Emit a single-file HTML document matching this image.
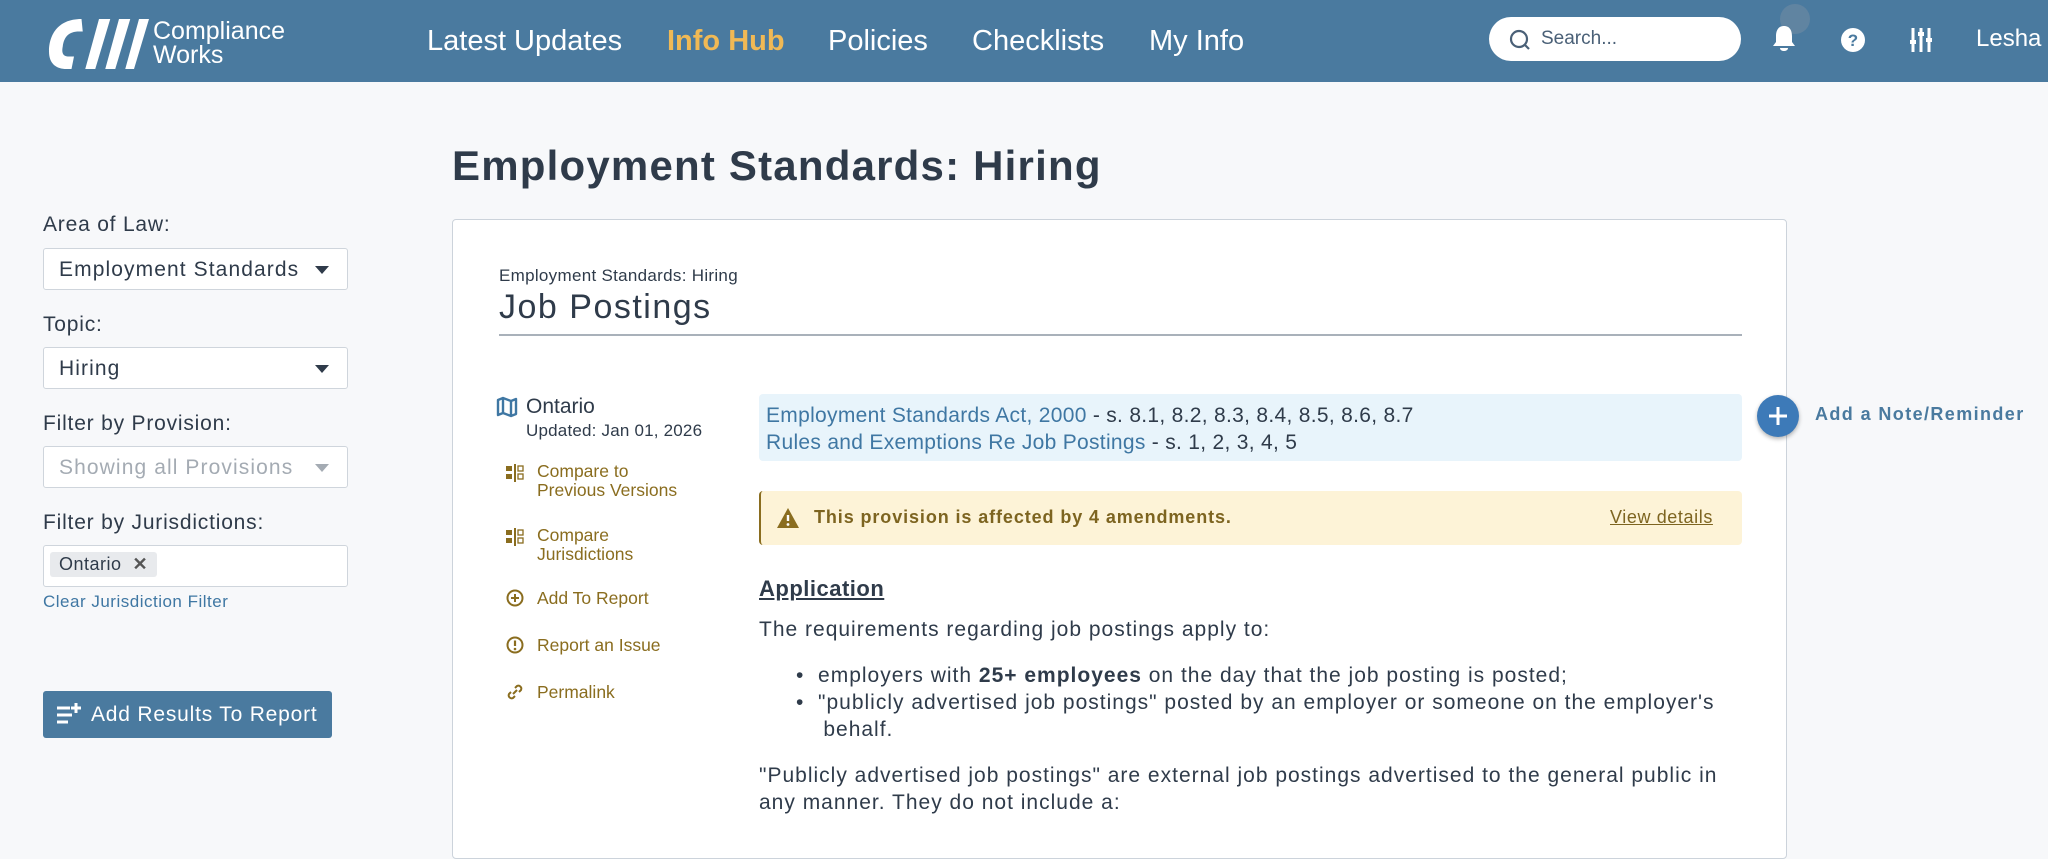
<!DOCTYPE html>
<html><head><meta charset="utf-8"><style>
*{box-sizing:border-box;margin:0;padding:0}
body{width:2048px;height:836px;overflow:hidden;background:#f7f8fa;font-family:"Liberation Sans",sans-serif;color:#2f3b4a;position:relative}
.a{position:absolute;white-space:nowrap}
header{position:absolute;left:0;top:0;width:2048px;height:82px;background:#4a7a9f}
.nav{font-size:29px;color:#fff;top:25px}
.lbl{font-size:21px;color:#2f3b4a;left:43px;letter-spacing:0.8px}
.sel{position:absolute;left:43px;width:305px;height:42px;background:#fff;border:1.5px solid #cfd5dc;border-radius:3px;font-size:21px;padding:9px 15px;letter-spacing:1.1px}
.sel .car{position:absolute;right:18px;top:17px;width:0;height:0;border-left:7px solid transparent;border-right:7px solid transparent;border-top:8px solid #2f3b4a}
.gold{color:#8a6d1f;font-size:17.5px;line-height:19px}
.ic{position:absolute;left:506px}
.body{font-size:21px;color:#2f3b4a;letter-spacing:1px}
</style></head><body>
<header>
<svg class="a" style="left:44px;top:14px" width="260" height="56" viewBox="0 0 260 56">
<g transform="scale(1.25)">
<path d="M30 4 C10 4 4 18 4 30 C4 40 10 44 18 44 L22 44 L24 34 L20 34 C15 34 14 31 15 26 C16 18 20 14 28 14 L31 14 Z" fill="#fff"/>
<path d="M44 4 L53 4 L41 44 L33 44 Z" fill="#fff"/>
<path d="M60 4 L69 4 L57 44 L49 44 Z" fill="#fff"/>
<path d="M76 4 L84 4 L72 44 L65 44 Z" fill="#fff"/>
</g>
<text x="109" y="25" font-family="Liberation Sans" font-size="25" fill="#fff">Compliance</text>
<text x="109" y="49" font-family="Liberation Sans" font-size="25" fill="#fff">Works</text>
</svg>
<div class="a nav" style="left:427px">Latest Updates</div>
<div class="a nav" style="left:667px;color:#f0b955;font-weight:bold">Info Hub</div>
<div class="a nav" style="left:828px">Policies</div>
<div class="a nav" style="left:972px">Checklists</div>
<div class="a nav" style="left:1149px">My Info</div>
<div class="a" style="left:1489px;top:17px;width:252px;height:44px;background:#fff;border-radius:22px"></div>
<svg class="a" style="left:1508px;top:28px" width="24" height="24" viewBox="0 0 24 24"><circle cx="11" cy="11" r="8" fill="none" stroke="#4a6077" stroke-width="2.2"/><path d="M17 17 L21 21" stroke="#4a6077" stroke-width="2.2"/></svg>
<div class="a" style="left:1541px;top:28px;font-size:19px;color:#4a6077">Search...</div>
<div class="a" style="left:1780px;top:4px;width:30px;height:30px;border-radius:50%;background:#6f8aa3;opacity:.6"></div>
<svg class="a" style="left:1770px;top:24px" width="28" height="30" viewBox="0 0 28 30"><path d="M14 2 C8 2 6 7 6 12 L6 18 L3 22 L25 22 L22 18 L22 12 C22 7 20 2 14 2Z M10 24 L18 24 C18 28 10 28 10 24Z" fill="#fff"/></svg>
<svg class="a" style="left:1840px;top:27px" width="26" height="26" viewBox="0 0 26 26"><circle cx="13" cy="13" r="12" fill="#fff"/><text x="13" y="19" text-anchor="middle" font-family="Liberation Sans" font-weight="bold" font-size="17" fill="#4a7a9f">?</text></svg>
<svg class="a" style="left:1910px;top:26px" width="22" height="28" viewBox="0 0 22 28"><g stroke="#fff" stroke-width="3"><path d="M3 2V26M11 2V26M19 2V26"/></g><g fill="#fff"><rect x="0" y="14" width="6" height="4"/><rect x="8" y="6" width="6" height="4"/><rect x="16" y="12" width="6" height="4"/></g></svg>
<div class="a" style="left:1976px;top:25px;font-size:24px;color:#fff">Lesha</div>
</header>

<div class="a lbl" style="top:213px">Area of Law:</div>
<div class="sel" style="top:248px">Employment Standards<span class="car"></span></div>
<div class="a lbl" style="top:313px">Topic:</div>
<div class="sel" style="top:347px">Hiring<span class="car"></span></div>
<div class="a lbl" style="top:412px">Filter by Provision:</div>
<div class="sel" style="top:446px;color:#a4abb3">Showing all Provisions<span class="car" style="border-top-color:#a4abb3"></span></div>
<div class="a lbl" style="top:511px">Filter by Jurisdictions:</div>
<div class="sel" style="top:545px;padding:6px 6px;letter-spacing:0.5px"><span style="display:inline-block;background:#e8eaed;border-radius:3px;padding:2px 9px;font-size:18px">Ontario &nbsp;<b style="color:#555">✕</b></span></div>
<div class="a" style="left:43px;top:592px;font-size:17px;color:#3f77a3;letter-spacing:0.5px">Clear Jurisdiction Filter</div>
<div class="a" style="left:43px;top:691px;width:289px;height:47px;background:#4a7a9f;border-radius:3px;color:#fff;font-size:21px;padding:12px 0 0 48px;letter-spacing:0.8px">Add Results To Report</div>
<svg class="a" style="left:56px;top:702px" width="26" height="24" viewBox="0 0 26 24"><g stroke="#fff" stroke-width="3"><path d="M1 6H14M1 13H16M1 20H12M20 1V11M15 6H25"/></g></svg>

<div class="a" style="left:452px;top:142px;font-size:42px;font-weight:bold;color:#2f3b4a;letter-spacing:1.2px">Employment Standards: Hiring</div>
<div class="a" style="left:452px;top:219px;width:1335px;height:640px;background:#fff;border:1.5px solid #ccd3db;border-radius:4px"></div>
<div class="a" style="left:499px;top:266px;font-size:17px;letter-spacing:0.3px">Employment Standards: Hiring</div>
<div class="a" style="left:499px;top:288px;font-size:34px;letter-spacing:1.5px">Job Postings</div>
<div class="a" style="left:499px;top:334px;width:1243px;height:1.5px;background:#a9b1ba"></div>

<svg class="a" style="left:496px;top:396px" width="22" height="22" viewBox="0 0 22 22"><path d="M2 4 L7 2 L15 5 L20 3 L20 18 L15 20 L7 17 L2 19Z M7 2V17 M15 5V20" fill="none" stroke="#3f77a3" stroke-width="2.4" stroke-linejoin="round"/></svg>
<div class="a" style="left:526px;top:395px;font-size:21px">Ontario</div>
<div class="a" style="left:526px;top:421px;font-size:17px;letter-spacing:0.2px">Updated: Jan 01, 2026</div>
<svg class="ic" style="top:464px" width="18" height="18" viewBox="0 0 18 18" fill="#8a6d1f"><rect x="0" y="2" width="6" height="5"/><rect x="0" y="10" width="6" height="5"/><rect x="8" y="0" width="2" height="18"/><rect x="12" y="2" width="5" height="5" fill="none" stroke="#8a6d1f" stroke-width="1.3"/><rect x="12" y="10" width="5" height="5" fill="none" stroke="#8a6d1f" stroke-width="1.3"/></svg>
<div class="a gold" style="left:537px;top:462px">Compare to<br>Previous Versions</div>
<svg class="ic" style="top:528px" width="18" height="18" viewBox="0 0 18 18" fill="#8a6d1f"><rect x="0" y="2" width="6" height="5"/><rect x="0" y="10" width="6" height="5"/><rect x="8" y="0" width="2" height="18"/><rect x="12" y="2" width="5" height="5" fill="none" stroke="#8a6d1f" stroke-width="1.3"/><rect x="12" y="10" width="5" height="5" fill="none" stroke="#8a6d1f" stroke-width="1.3"/></svg>
<div class="a gold" style="left:537px;top:526px">Compare<br>Jurisdictions</div>
<svg class="ic" style="top:589px" width="18" height="18" viewBox="0 0 18 18"><circle cx="9" cy="9" r="7.5" fill="none" stroke="#8a6d1f" stroke-width="2"/><path d="M9 5V13M5 9H13" stroke="#8a6d1f" stroke-width="2"/></svg>
<div class="a gold" style="left:537px;top:589px">Add To Report</div>
<svg class="ic" style="top:636px" width="18" height="18" viewBox="0 0 18 18"><circle cx="9" cy="9" r="7.5" fill="none" stroke="#8a6d1f" stroke-width="2"/><path d="M9 4.5V10" stroke="#8a6d1f" stroke-width="2.2"/><circle cx="9" cy="13" r="1.3" fill="#8a6d1f"/></svg>
<div class="a gold" style="left:537px;top:636px">Report an Issue</div>
<svg class="ic" style="top:683px" width="18" height="18" viewBox="0 0 18 18"><g fill="none" stroke="#8a6d1f" stroke-width="2"><path d="M7 11 L11 7"/><path d="M9 5 L11 3 A3 3 0 0 1 15 7 L13 9"/><path d="M5 9 L3 11 A3 3 0 0 0 7 15 L9 13"/></g></svg>
<div class="a gold" style="left:537px;top:683px">Permalink</div>

<div class="a" style="left:759px;top:394px;width:983px;height:67px;background:#e8f4fb;border-radius:4px"></div>
<div class="a body" style="left:766px;top:402px;line-height:27px;letter-spacing:0.3px"><span style="color:#3f77a3">Employment Standards Act, 2000</span> - s. 8.1, 8.2, 8.3, 8.4, 8.5, 8.6, 8.7<br><span style="color:#3f77a3">Rules and Exemptions Re Job Postings</span> - s. 1, 2, 3, 4, 5</div>
<div class="a" style="left:1757px;top:395px;width:42px;height:42px;border-radius:50%;background:#3d7ab8;box-shadow:0 2px 4px rgba(0,0,0,.3)"></div>
<svg class="a" style="left:1768px;top:406px" width="20" height="20"><path d="M10 1V19M1 10H19" stroke="#fff" stroke-width="3"/></svg>
<div class="a" style="left:1815px;top:404px;font-size:18px;font-weight:bold;color:#4a7a9f;letter-spacing:1.4px">Add a Note/Reminder</div>

<div class="a" style="left:759px;top:491px;width:983px;height:54px;background:#fdf3d7;border-left:2.5px solid #8a6d1f;border-radius:4px"></div>
<svg class="a" style="left:776px;top:507px" width="24" height="22" viewBox="0 0 24 22"><path d="M12 1 L23 21 L1 21Z" fill="#8a6d1f"/><path d="M12 8V14" stroke="#fff" stroke-width="2.4"/><circle cx="12" cy="17.5" r="1.4" fill="#fff"/></svg>
<div class="a" style="left:814px;top:507px;font-size:18px;font-weight:bold;color:#7d6420;letter-spacing:0.9px">This provision is affected by 4 amendments.</div>
<div class="a" style="left:1610px;top:507px;font-size:18px;color:#7d6420;text-decoration:underline;letter-spacing:0.6px">View details</div>

<div class="a" style="left:759px;top:576px;font-size:22px;font-weight:bold;text-decoration:underline;letter-spacing:0.5px">Application</div>
<div class="a body" style="left:759px;top:618px">The requirements regarding job postings apply to:</div>
<div class="a body" style="left:796px;top:662px;line-height:27px">•&nbsp;&nbsp;employers with <b>25+ employees</b> on the day that the job posting is posted;<br>•&nbsp;&nbsp;"publicly advertised job postings" posted by an employer or someone on the employer's<br>&nbsp;&nbsp;&nbsp;&nbsp;behalf.</div>
<div class="a body" style="left:759px;top:762px;line-height:27px">"Publicly advertised job postings" are external job postings advertised to the general public in<br>any manner. They do not include a:</div>
</body></html>
